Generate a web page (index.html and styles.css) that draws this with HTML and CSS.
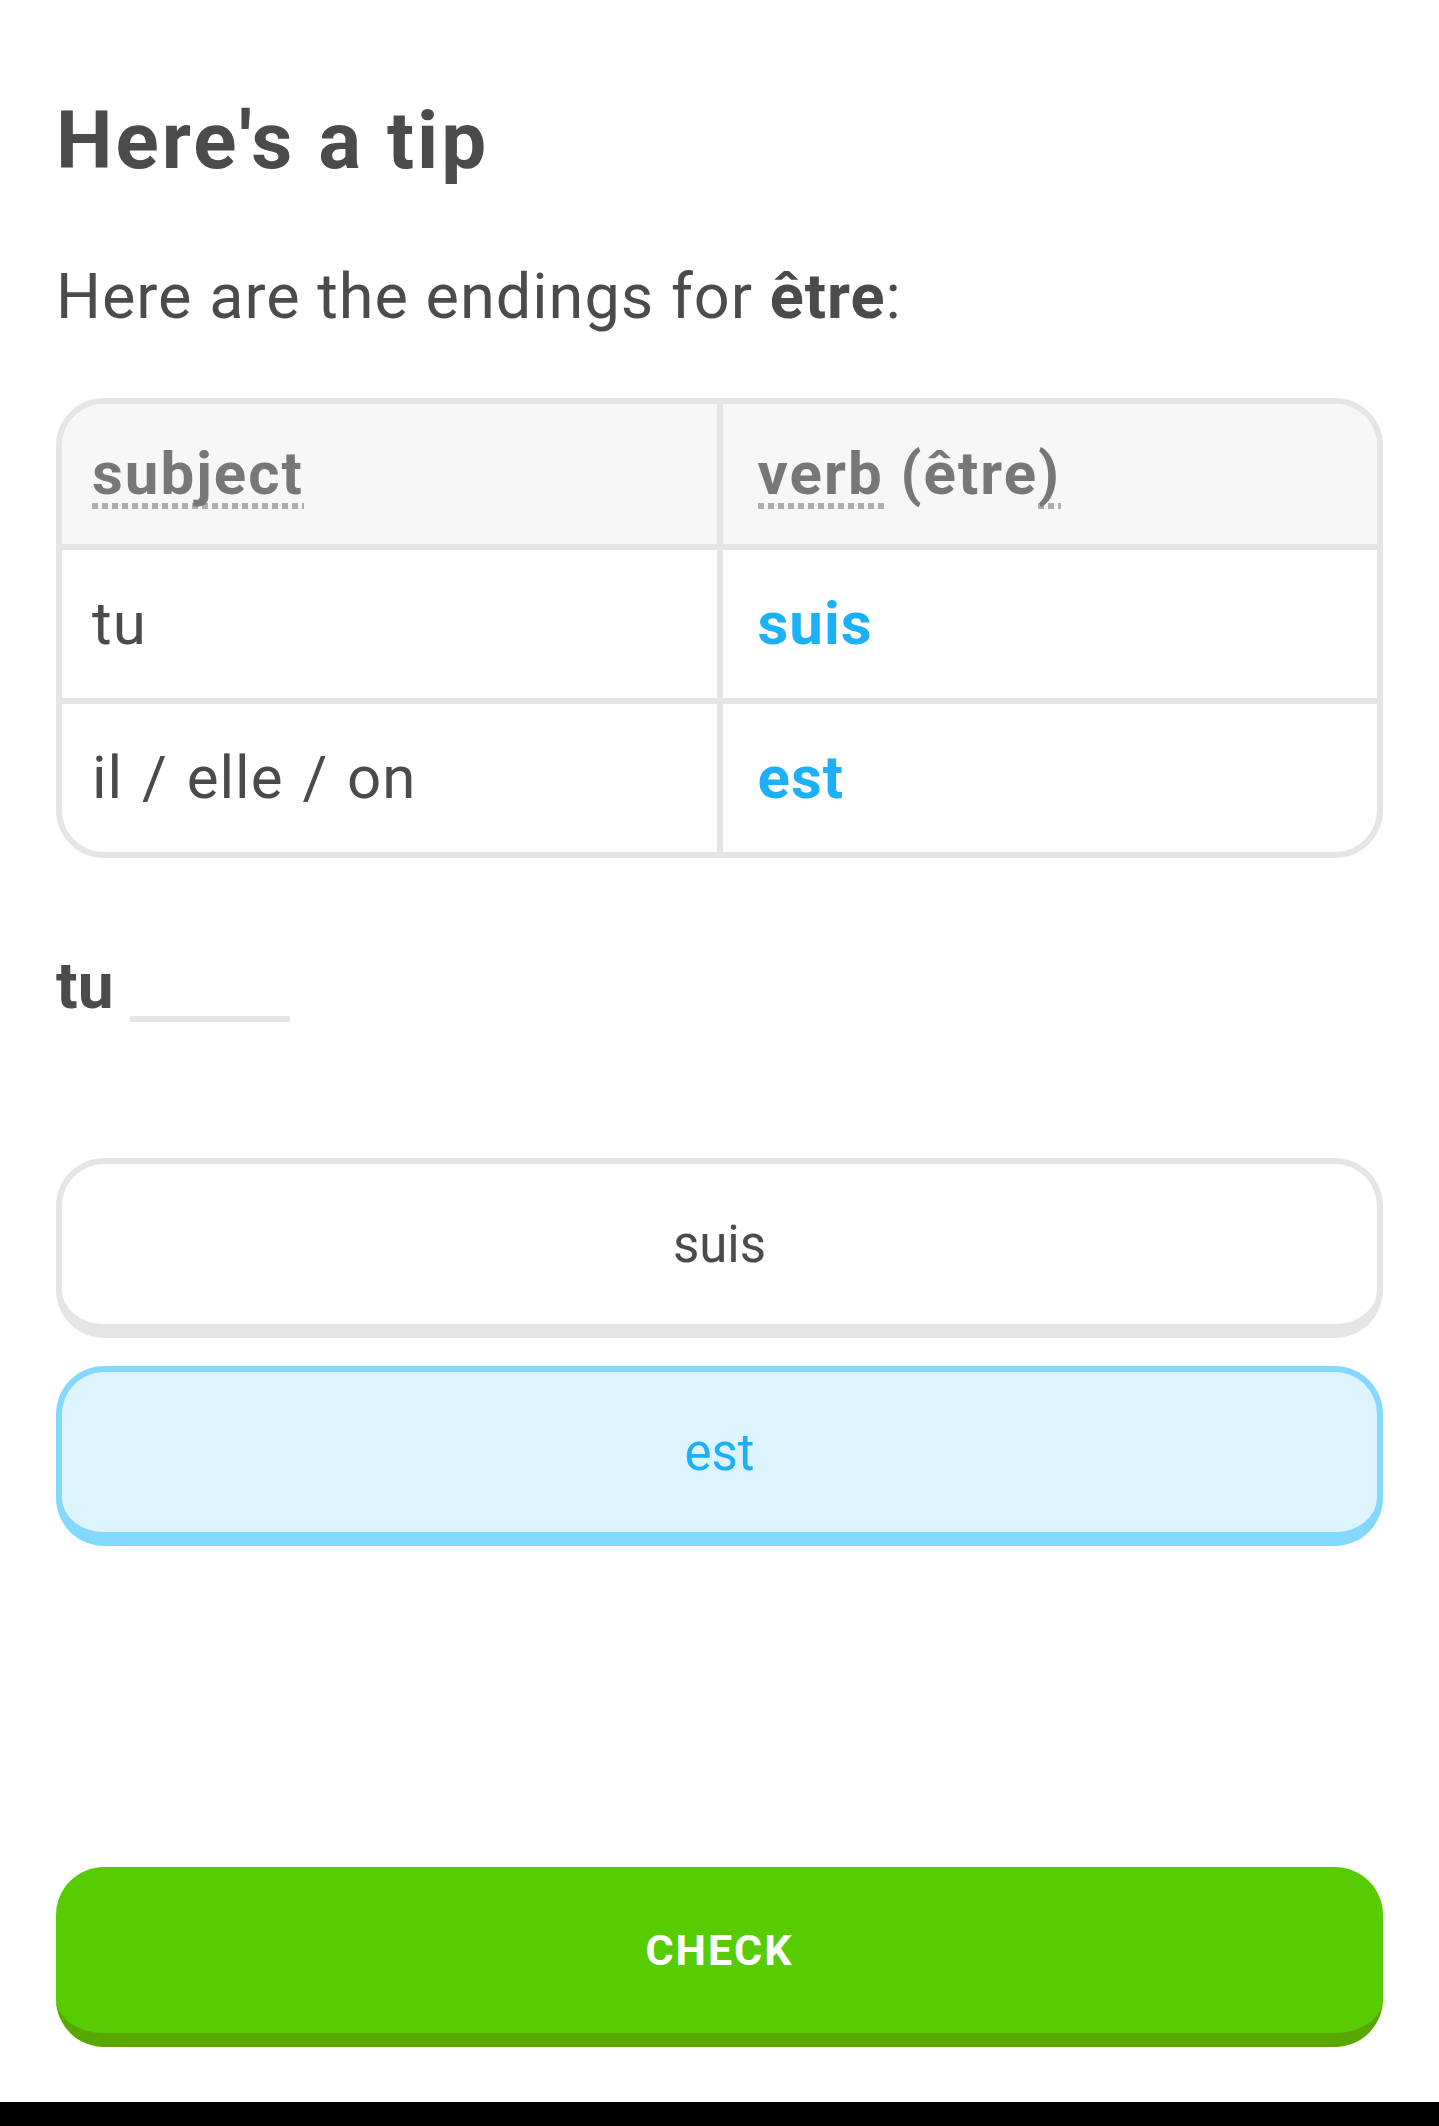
FILE: index.html
```html
<!DOCTYPE html>
<html lang="en">
<head>
  <meta charset="UTF-8">
  <title>Here's a tip</title>
  <link rel="stylesheet" href="styles.css">
</head>
<body>
  <main class="lesson">
    <h1 class="title">Here's a tip</h1>
    <p class="intro">Here are the endings for <b>être</b>:</p>

    <!-- Conjugation table -->
    <div class="tip-table">
      <table>
        <thead>
          <tr>
            <th><span class="hint">subject</span></th>
            <th><span class="hint">verb</span> (être<span class="hint">)</span></th>
          </tr>
        </thead>
        <tbody>
          <tr>
            <td>tu</td>
            <td class="ending">suis</td>
          </tr>
          <tr>
            <td>il / elle / on</td>
            <td class="ending">est</td>
          </tr>
        </tbody>
      </table>
    </div>

    <p class="prompt"><b>tu</b> <span class="blank"></span></p>

    <div class="choices">
      <button class="choice" type="button">suis</button>
      <button class="choice selected" type="button">est</button>
    </div>
  </main>

  <footer class="action-bar">
    <button class="check" type="button">Check</button>
  </footer>
  <div class="nav-bar"></div>
</body>
</html>
```

FILE: styles.css
```css
body {
  margin: 0;
  padding: 0 56px;
  font-family: Roboto, "Noto Sans", sans-serif;
  color: #4b4b4b;
  background: #fff;
}
.title {
  margin: 93px 0 0;
  font-size: 80px;
  line-height: 96px;
  font-weight: bold;
  letter-spacing: 3px;
}
.intro {
  margin: 68px 0 0;
  font-size: 63px;
  line-height: 80px;
  letter-spacing: 1px;
}
.intro b {
  font-weight: bold;
}

/* table */
.tip-table {
  margin-top: 61px;
  border: 6px solid #e5e5e5;
  border-radius: 48px;
  overflow: hidden;
}
.tip-table table {
  width: 100%;
  border-collapse: collapse;
  table-layout: fixed;
}
.tip-table th,
.tip-table td {
  padding: 0 30px;
  text-align: left;
  font-size: 60px;
  line-height: 72px;
  letter-spacing: 1px;
  vertical-align: middle;
}
.tip-table th:first-child {
  width: calc(49.8% - 60px);
}
.tip-table th + th,
.tip-table td + td {
  border-left: 6px solid #e5e5e5;
  padding-left: 35px;
}
.tip-table th {
  height: 140px;
  background: #f7f7f7;
  color: #777;
  font-weight: bold;
  letter-spacing: 2px;
}
.tip-table td {
  height: 148px;
  border-top: 6px solid #e5e5e5;
}
.tip-table td:first-child {
  word-spacing: 3px;
}
.tip-table .ending {
  color: #1cb0f6;
  font-weight: bold;
}
.hint {
  background: repeating-linear-gradient(90deg, #afafaf 0 6px, transparent 6px 10px) left bottom / 100% 6px no-repeat;
}

/* fill in the blank */
.prompt {
  margin: 89px 0 0;
  font-size: 64px;
  line-height: 80px;
}
.blank {
  display: inline-block;
  width: 160px;
  height: 0;
  margin-left: 1px;
  border-bottom: 6px solid #e5e5e5;
  vertical-align: -14px;
}

.choices {
  margin-top: 131px;
  display: flex;
  flex-direction: column;
  gap: 28px;
}
.choice {
  height: 180px;
  box-sizing: border-box;
  border: 6px solid #e5e5e5;
  border-bottom-width: 14px;
  border-radius: 48px;
  background: #fff;
  font-family: inherit;
  font-size: 51px;
  color: #4b4b4b;
  padding: 0;
}
.choice.selected {
  background: #ddf4ff;
  border-color: #84d8ff;
  color: #1cb0f6;
}

.action-bar {
  margin-top: 321px;
}
.check {
  display: block;
  width: 100%;
  height: 180px;
  box-sizing: border-box;
  border: none;
  border-bottom: 14px solid #58a700;
  border-radius: 48px;
  background: #58cc02;
  color: #fff;
  font-family: inherit;
  font-size: 43px;
  font-weight: bold;
  letter-spacing: 2px;
  text-transform: uppercase;
  padding: 0;
}

.nav-bar {
  height: 24px;
  margin: 55px -56px 0;
  background: #000;
}
```
